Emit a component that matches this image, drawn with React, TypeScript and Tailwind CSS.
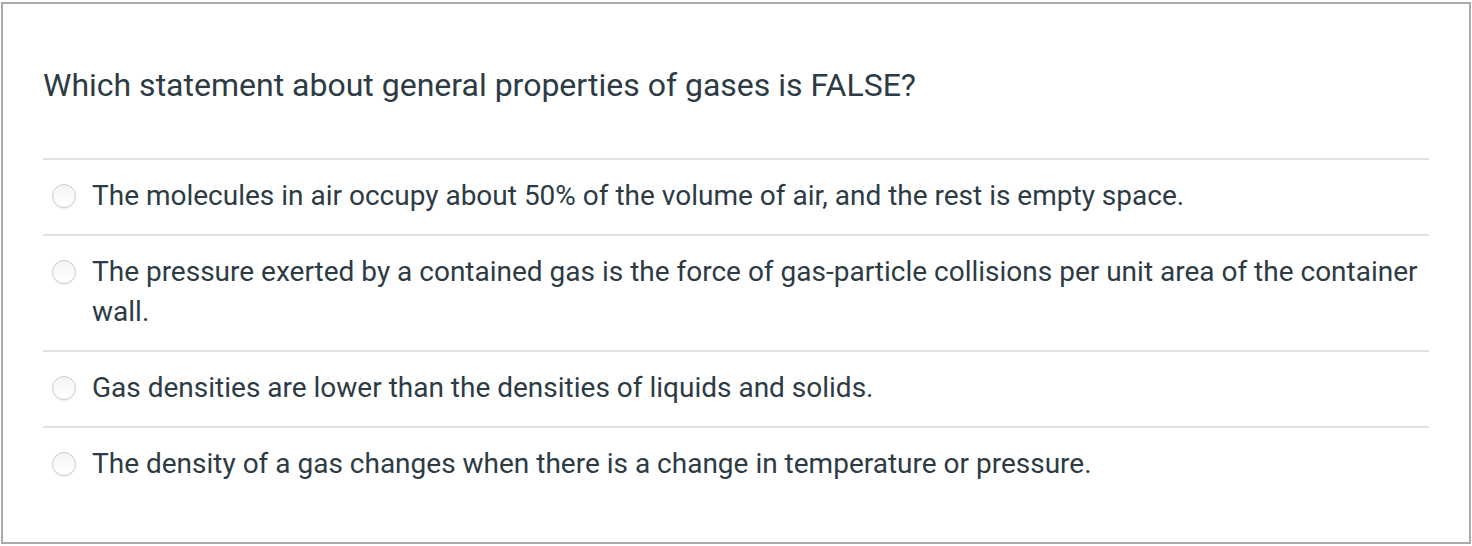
const options = [
  "The molecules in air occupy about 50% of the volume of air, and the rest is empty space.",
  "The pressure exerted by a contained gas is the force of gas-particle collisions per unit area of the container wall.",
  "Gas densities are lower than the densities of liquids and solids.",
  "The density of a gas changes when there is a change in temperature or pressure.",
];

export default function App() {
  return (
    <div className="pt-[2px] pl-[1px] bg-white" style={{ fontFamily: "Roboto, 'Noto Sans', sans-serif" }}>
      <div className="w-[1470px] h-[542px] border-2 border-[#a9a9a9] bg-white pl-[40px] pr-[40px] text-[#2d3b45]">
        <div className="pt-[62px] pb-[54px] text-[32px] leading-[38px]">
          Which statement about general properties of gases is FALSE?
        </div>
        <div className="border-t-2 border-[#e2e2e2]">
          {options.map((text, i) => (
            <div
              key={i}
              className={`flex items-start pt-[16px] pb-[18px] ${i < options.length - 1 ? "border-b-2 border-[#e2e2e2]" : ""}`}
            >
              <span className="mt-[8px] ml-[9px] mr-[16px] w-[24px] h-[24px] shrink-0 rounded-full border border-[#cdcdcd] bg-gradient-to-b from-[#f5f5f5] to-white shadow-[0_1px_1px_rgba(0,0,0,0.08)]" />
              <span className="text-[28px] leading-[40px]">{text}</span>
            </div>
          ))}
        </div>
      </div>
    </div>
  );
}
